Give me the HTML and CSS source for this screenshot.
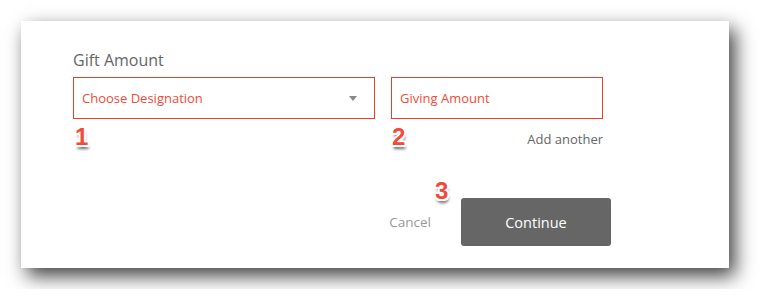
FILE: index.html
```html
<!DOCTYPE html>
<html lang="en">
<head>
    <meta charset="UTF-8">
    <meta name="viewport" content="width=device-width, initial-scale=1.0">
    <title>Gift Amount</title>
    <link rel="stylesheet" href="styles.css">
</head>
<body>
    <div class="card">
        <div class="label">Gift Amount</div>
        <div class="fields">
            <div class="field select">
                <span>Choose Designation</span>
                <span class="arrow"></span>
            </div>
            <div class="field amount">
                <span>Giving Amount</span>
            </div>
        </div>
        <div class="add-row">
            <a class="add-link">Add another</a>
        </div>
        <div class="actions">
            <a class="cancel">Cancel</a>
            <button class="btn">Continue</button>
        </div>

        <span class="marker m1">1</span>
        <span class="marker m2">2</span>
        <span class="marker m3">3</span>
    </div>
</body>
</html>
```

FILE: styles.css
```css
body {
    margin: 0;
    background-color: #fff;
    font-family: "Open Sans", Lato, sans-serif;
}

.card {
    position: relative;
    margin: 21px;
    width: 708px;
    height: 247px;
    box-sizing: border-box;
    padding: 28px 0 0 52px;
    background-color: #fff;
    box-shadow: 6px 8px 18px rgba(0, 0, 0, 0.75);
}

.label {
    font-size: 16px;
    line-height: 22px;
    color: #666;
    margin-bottom: 6px;
}

.fields {
    display: flex;
    gap: 16px;
}

.field {
    display: flex;
    align-items: center;
    justify-content: space-between;
    box-sizing: border-box;
    height: 42px;
    padding: 0 17px 0 8px;
    border: 1px solid #e8402a;
    color: #ee4b38;
    font-size: 13px;
}

.select {
    width: 302px;
}

.amount {
    width: 212px;
}

.arrow {
    width: 0;
    height: 0;
    border-left: 4px solid transparent;
    border-right: 4px solid transparent;
    border-top: 5px solid #888;
}

.add-row {
    width: 530px;
    margin-top: 12px;
    text-align: right;
    font-size: 13px;
    line-height: 16px;
}

.add-link {
    color: #666;
}

.actions {
    display: flex;
    align-items: center;
    justify-content: flex-end;
    gap: 30px;
    width: 538px;
    margin-top: 51px;
}

.cancel {
    color: #999;
    font-size: 13.5px;
}

.btn {
    width: 150px;
    height: 48px;
    border: none;
    border-radius: 3px;
    background-color: #666;
    color: #fff;
    font-family: inherit;
    font-size: 14.5px;
    cursor: pointer;
}

.marker {
    position: absolute;
    font-family: "Liberation Sans", Arial, sans-serif;
    font-weight: bold;
    font-size: 24px;
    line-height: 24px;
    color: #f24b3b;
    text-shadow:
        -2px 0 #fff, 2px 0 #fff, 0 -2px #fff, 0 2px #fff,
        -1.5px -1.5px #fff, 1.5px -1.5px #fff, -1.5px 1.5px #fff, 1.5px 1.5px #fff,
        1px 4px 3px rgba(0, 0, 0, 0.6);
}

.m1 {
    left: 54px;
    top: 104px;
}

.m2 {
    left: 371px;
    top: 104px;
}

.m3 {
    left: 414px;
    top: 158px;
}
```
